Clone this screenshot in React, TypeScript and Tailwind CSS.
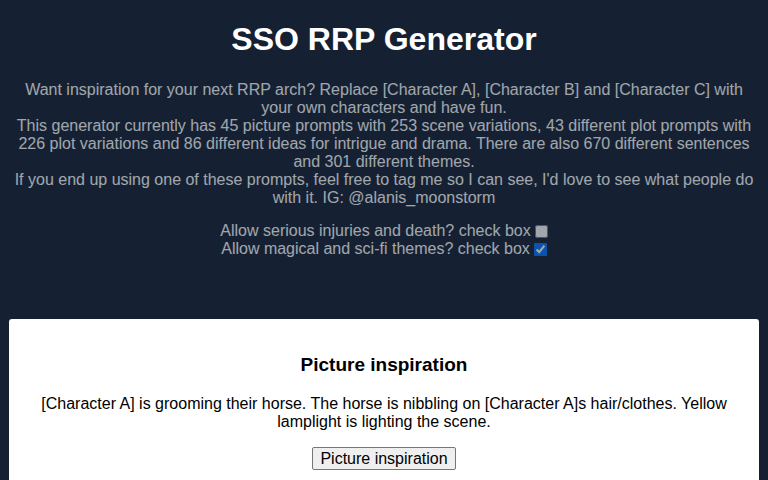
import { useState } from 'react';

const sans = "font-['Liberation_Sans',Arial,sans-serif]";

export default function App() {
    const [injuries, setInjuries] = useState(false);
    const [magic, setMagic] = useState(true);

    return (
        <div className={`min-h-[480px] bg-[#152132] ${sans} text-white flex flex-col items-center`}>
            <h1 className="mt-[20px] text-[32px] leading-[38px] font-bold">SSO RRP Generator</h1>

            {/* Intro text, dimmed */}
            <div className="mt-[23px] px-[14px] text-center text-[16px] leading-[18px] opacity-60">
                <p>Want inspiration for your next RRP arch? Replace [Character A], [Character B] and [Character C] with your own characters and have fun.</p>
                <p>This generator currently has 45 picture prompts with 253 scene variations, 43 different plot prompts with 226 plot variations and 86 different ideas for intrigue and drama. There are also 670 different sentences and 301 different themes.</p>
                <p>If you end up using one of these prompts, feel free to tag me so I can see, I'd love to see what people do with it. IG: @alanis_moonstorm</p>

                <div className="mt-[15px]">
                    <label className="flex items-center justify-center gap-[4px]">
                        Allow serious injuries and death? check box
                        <input type="checkbox" checked={injuries} onChange={e => setInjuries(e.target.checked)} className="w-[13px] h-[13px] m-0" />
                    </label>
                    <label className="flex items-center justify-center gap-[4px]">
                        Allow magical and sci-fi themes? check box
                        <input type="checkbox" checked={magic} onChange={e => setMagic(e.target.checked)} className="w-[13px] h-[13px] m-0" />
                    </label>
                </div>
            </div>

            {/* Prompt card */}
            <div className="mt-[61px] w-[750px] bg-white rounded-[3px] text-black text-center pt-[34px] pb-[20px] px-[24px]">
                <h2 className="text-[19px] leading-[24px] font-bold">Picture inspiration</h2>
                <p className="mt-[18px] text-[16px] leading-[18px]">
                    [Character A] is grooming their horse. The horse is nibbling on [Character A]s hair/clothes. Yellow lamplight is lighting the scene.
                </p>
                <button className="mt-[16px] px-[7px] py-[1px] text-[16px] leading-[19px] bg-[#efefef] border border-[#767676] rounded-[2px]">
                    Picture inspiration
                </button>
            </div>
        </div>
    );
}
